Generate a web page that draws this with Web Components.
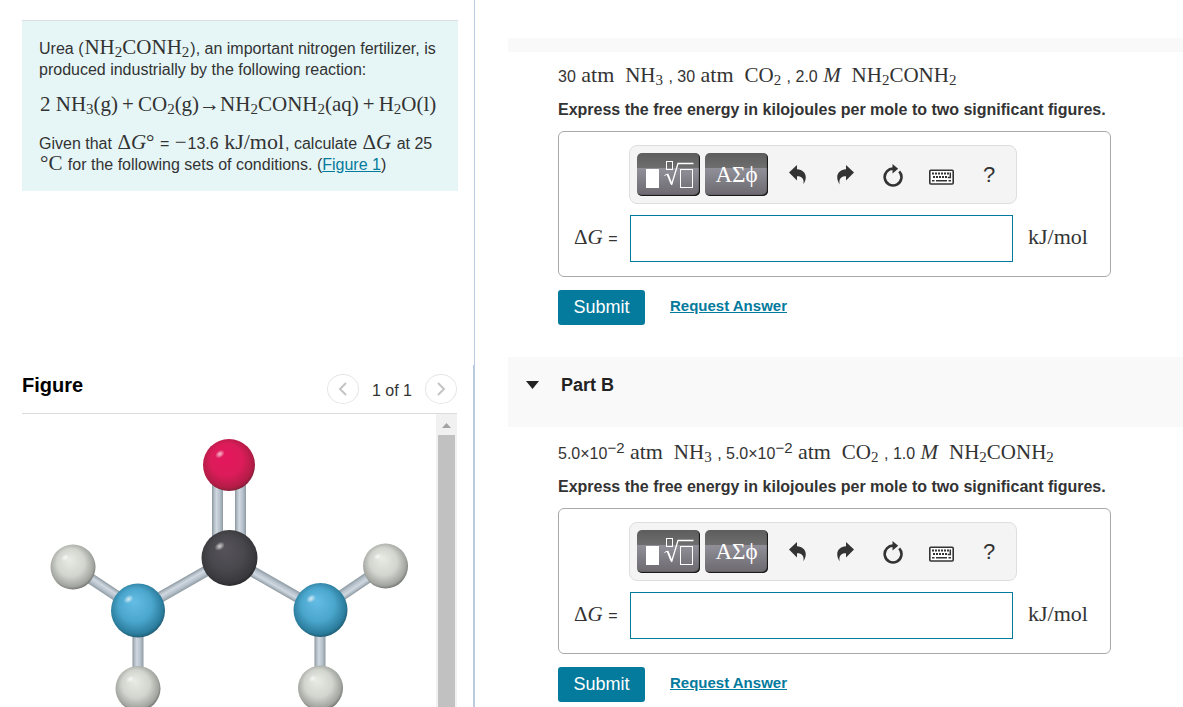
<!DOCTYPE html>
<html lang="en">
<head>
<meta charset="utf-8">
<meta name="viewport" content="width=device-width, initial-scale=1">
<title>Urea - Gibbs free energy</title>
<style>
  body {
    margin: 0;
    background: #fff;
    color: #333;
    font: 16px/20px "Liberation Sans", Arial, sans-serif;
  }
</style>
</head>
<body>
<assignment-page>
  <problem-intro slot="intro">
    <p>Urea (<math-text>NH2CONH2</math-text>), an important nitrogen fertilizer, is<br>
      produced industrially by the following reaction:</p>
    <p class="reaction"><math-text>2 NH3(g) + CO2(g)→NH2CONH2(aq) + H2O(l)</math-text></p>
    <p>Given that <math-text>Δ_G°</math-text> = <math-text>−</math-text>13.6 <math-text unit>kJ/mol</math-text>, calculate <math-text>Δ_G</math-text> at 25<br>
      <math-text>°C</math-text> for the following sets of conditions. (<a href="#figure">Figure 1</a>)</p>
  </problem-intro>

  <figure-viewer slot="figure" id="figure" heading="Figure" index="1" total="1">
    <urea-molecule></urea-molecule>
  </figure-viewer>

  <problem-part>
    <span slot="conditions">30 <math-text unit>atm</math-text>&nbsp; <math-text>NH3</math-text> , 30 <math-text unit>atm</math-text>&nbsp; <math-text>CO2</math-text> , 2.0 <math-text>_M</math-text>&nbsp; <math-text>NH2CONH2</math-text></span>
    Express the free energy in kilojoules per mole to two significant figures.
  </problem-part>

  <problem-part label="Part B">
    <span slot="conditions">5.0×10<sup>−2</sup> <math-text unit>atm</math-text>&nbsp; <math-text>NH3</math-text> , 5.0×10<sup>−2</sup> <math-text unit>atm</math-text>&nbsp; <math-text>CO2</math-text> , 1.0 <math-text>_M</math-text>&nbsp; <math-text>NH2CONH2</math-text></span>
    Express the free energy in kilojoules per mole to two significant figures.
  </problem-part>
</assignment-page>

<script>
/**
 * Inline math. Digits after a letter become subscripts,
 * an underscore makes the next letter italic.
 */
class MathText extends HTMLElement {
  constructor() {
    super();
    this.attachShadow({ mode: 'open' });
  }

  connectedCallback() {
    this.render();
  }

  format(source) {
    return source
      .replace(/([A-Z])(\d)/g, '$1<sub>$2</sub>')
      .replace(/_([A-Z])/g, '<i>$1</i>')
      .replace(/ \+ /g, '<span class="op">+</span>');
  }

  render() {
    // no whitespace before the text, it would show up inline
    this.shadowRoot.innerHTML = `<style>
        :host {
          margin: 0 1px;
          font-family: "Liberation Serif", "Times New Roman", serif;
          font-size: 21px;
          line-height: 0;
          white-space: nowrap;
        }
        :host([unit]) { font-size: 22px; }
        sub {
          font-size: 15px;
          line-height: 0;
          vertical-align: -3px;
        }
        .op { margin: 0 4px; }
      </style>${this.format(this.textContent.trim())}`;
  }
}

/** Two panes: problem text and figure on the left, parts on the right */
class AssignmentPage extends HTMLElement {
  constructor() {
    super();
    this.attachShadow({ mode: 'open' }).innerHTML = `
      <style>
        :host {
          display: grid;
          grid-template-columns: 475px minmax(0, 1fr);
          height: 100vh;
          overflow: hidden;
        }
        aside {
          display: flex;
          flex-direction: column;
          min-height: 0;
        }
        .intro {
          flex: 1;
          min-height: 0;
          padding: 20px 16px 0 22px;
          border-right: 1px solid #b8cbdf;
        }
        .figure {
          flex: 0 0 342px;
          display: flex;
          min-height: 0;
          padding: 0 16px 0 22px;
          border-right: 2px solid #b8cbdf;
          box-sizing: border-box;
        }
        main {
          padding: 38px 0 0 33px;
          overflow: hidden;
        }
      </style>
      <aside>
        <div class="intro"><slot name="intro"></slot></div>
        <div class="figure"><slot name="figure"></slot></div>
      </aside>
      <main><slot></slot></main>
    `;
  }
}

class ProblemIntro extends HTMLElement {
  constructor() {
    super();
    this.attachShadow({ mode: 'open' }).innerHTML = `
      <style>
        :host {
          display: block;
          background: #e6f6f7;
          border-top: 1px solid #d9dedf;
          padding: 17px 12px 16px 17px;
        }
        ::slotted(p) {
          margin: 0;
          line-height: 21px;
          white-space: nowrap;
        }
        ::slotted(.reaction) { margin: 15px 0 17px; }
      </style>
      <slot></slot>
    `;
  }

  connectedCallback() {
    this.querySelectorAll('a').forEach(a => {
      a.style.color = '#047a9c';
    });
  }
}

class FigureViewer extends HTMLElement {
  constructor() {
    super();
    this.attachShadow({ mode: 'open' });
  }

  connectedCallback() {
    this.shadowRoot.innerHTML = `
      <style>
        :host {
          flex: 1;
          display: flex;
          flex-direction: column;
          min-width: 0;
        }
        header {
          display: flex;
          align-items: center;
          justify-content: space-between;
          height: 48px;
          flex: none;
          border-bottom: 1px solid #dcdcdc;
        }
        h2 {
          margin: 0 0 8px;
          font-size: 20px;
          line-height: 24px;
          color: #000;
        }
        nav {
          display: flex;
          align-items: center;
          gap: 13px;
        }
        nav span { padding-top: 4px; }
        button {
          display: grid;
          place-items: center;
          width: 32px;
          height: 30px;
          padding: 0;
          border: 1px solid #e6e6e6;
          border-radius: 50%;
          background: #fff;
        }
        .body {
          flex: 1;
          display: flex;
          min-height: 0;
          overflow: hidden;
        }
        .content {
          flex: 1;
          min-width: 0;
          overflow: hidden;
        }
        .scrollbar {
          width: 21px;
          background: #f1f1f1;
          display: flex;
          flex-direction: column;
          align-items: center;
        }
        .scrollbar svg { flex: none; }
        .thumb {
          flex: 1;
          width: 17px;
          background: #c1c1c1;
        }
      </style>
      <header>
        <h2>${this.getAttribute('heading')}</h2>
        <nav aria-label="Figures">
          <button type="button" aria-label="Previous figure">
            <svg width="10" height="14" viewBox="0 0 10 14" fill="none" stroke="#c4c4c4" stroke-width="2"><path d="M8 1 2 7l6 6"/></svg>
          </button>
          <span>${this.getAttribute('index')} of ${this.getAttribute('total')}</span>
          <button type="button" aria-label="Next figure">
            <svg width="10" height="14" viewBox="0 0 10 14" fill="none" stroke="#c4c4c4" stroke-width="2"><path d="M2 1l6 6-6 6"/></svg>
          </button>
        </nav>
      </header>
      <div class="body">
        <div class="content"><slot></slot></div>
        <div class="scrollbar" aria-hidden="true">
          <svg width="21" height="21"><path d="M6 14h9l-4.500-5z" fill="#a3a3a3"/></svg>
          <div class="thumb"></div>
        </div>
      </div>
    `;
  }
}

/** Ball and stick model of urea */
class UreaMolecule extends HTMLElement {
  constructor() {
    super();
    this.attachShadow({ mode: 'open' });
  }

  connectedCallback() {
    const bonds = [
      [195.5, 70, 195.5, 125], [218.5, 70, 218.5, 125],
      [207, 144, 116, 196], [207, 144, 298, 196],
      [116, 196, 51, 153], [298, 196, 363, 152],
      [116, 196, 116, 274], [298, 196, 298, 274]
    ];
    const atoms = [
      ['o', 207, 51, 26], ['c', 207.5, 144, 28],
      ['n', 116, 196.5, 27], ['n', 298.5, 196, 27],
      ['h', 51, 153, 22.5], ['h', 363.5, 152, 22.5],
      ['h', 116, 274.5, 22.5], ['h', 298.5, 274, 22.5]
    ];
    this.shadowRoot.innerHTML = `
      <style>
        :host { display: block; }
        svg { display: block; }
      </style>
      <svg width="414" height="340" viewBox="0 0 414 340" role="img" aria-label="Urea molecule">
        <defs>
          <linearGradient id="bond" x2="0" y2="1">
            <stop offset="0" stop-color="#8f9ba3"/>
            <stop offset=".3" stop-color="#b7c2cc"/>
            <stop offset=".6" stop-color="#d0d8e1"/>
            <stop offset=".8" stop-color="#b3bec7"/>
            <stop offset="1" stop-color="#89949b"/>
          </linearGradient>
          ${this.ball('o', '#e5175e', '#dc1c5a', '#b31c47', '#71202f')}
          ${this.ball('c', '#56545a', '#49484d', '#39383c', '#252427')}
          ${this.ball('n', '#65bde5', '#4ba6cd', '#2b7d9d', '#1d5065')}
          ${this.ball('h', '#e8ece5', '#d2d5ce', '#a2a59f', '#62645f')}
          <radialGradient id="shine">
            <stop offset="0" stop-color="#fff" stop-opacity=".75"/>
            <stop offset="1" stop-color="#fff" stop-opacity="0"/>
          </radialGradient>
        </defs>
        ${bonds.map(b => this.bond(...b)).join('')}
        ${atoms.map(a => this.atom(...a)).join('')}
      </svg>
    `;
  }

  ball(id, light, main, dark, edge) {
    return `
      <radialGradient id="${id}" cx=".48" cy=".47" r=".56" fx=".42" fy=".32">
        <stop offset="0" stop-color="${light}"/>
        <stop offset=".55" stop-color="${main}"/>
        <stop offset=".87" stop-color="${dark}"/>
        <stop offset="1" stop-color="${edge}"/>
      </radialGradient>`;
  }

  bond(x1, y1, x2, y2) {
    const length = Math.hypot(x2 - x1, y2 - y1);
    const angle = Math.atan2(y2 - y1, x2 - x1) * 180 / Math.PI;
    return `<rect x="0" y="-5.5" width="${length}" height="11" fill="url(#bond)"
      transform="translate(${x1} ${y1}) rotate(${angle})"/>`;
  }

  atom(kind, x, y, r) {
    return `<circle cx="${x}" cy="${y}" r="${r}" fill="url(#${kind})"/>
      <ellipse cx="${x - r * .35}" cy="${y - r * .42}" rx="${r * .2}" ry="${r * .14}" fill="url(#shine)"
        transform="rotate(-35 ${x - r * .35} ${y - r * .42})"/>`;
  }
}

/** Toolbar over the answer box */
class MathToolbar extends HTMLElement {
  constructor() {
    super();
    this.attachShadow({ mode: 'open' }).innerHTML = `
      <style>
        :host {
          display: flex;
          align-items: center;
          height: 59px;
          padding: 0 0 0 7px;
          box-sizing: border-box;
          border: 1px solid #dedede;
          border-radius: 8px;
          background: #f4f4f4;
        }
        button {
          display: grid;
          place-items: center;
          flex: 0 1 48px;
          height: 43px;
          padding: 0;
          border: 0;
          background: none;
          color: #333;
          font: 22px/22px "Liberation Sans", Arial, sans-serif;
        }
        .palette {
          flex: none;
          width: 63px;
          margin-right: 5px;
          border-radius: 5px;
          background: linear-gradient(#5d5d5d, #6e6e6e 15px, #918f98 15px, #6b696e);
          box-shadow: inset -1px -1px 1px #111;
          color: #fff;
        }
        .greek {
          font: 23px/41px "Liberation Serif", "DejaVu Serif", serif;
        }
      </style>
      <button class="palette" type="button" aria-label="Templates">
        <svg width="63" height="43" viewBox="0 0 63 43" fill="none" stroke="#fff">
          <rect x="9.500" y="16.500" width="12" height="18" fill="#fff"/>
          <rect x="29.500" y="8.500" width="6" height="8"/>
          <path d="M27.500 22.500l3-1.500" />
          <path d="M30.500 21l4 10" stroke-width="2"/>
          <path d="M34.500 32L41 10.500h15.500" stroke-width="1.300"/>
          <rect x="43.500" y="16.500" width="12" height="18"/>
        </svg>
      </button>
      <button class="palette greek" type="button" aria-label="Symbols">ΑΣϕ</button>
      <button type="button" aria-label="Undo">
        <svg width="17" height="20" viewBox="0 0 17 20" fill="#333"><path d="M0 7.500 8 0v4.300c8 .7 11.500 7 6.300 15.200C15.500 14 13 11.300 8 11.300v4.200z"/></svg>
      </button>
      <button type="button" aria-label="Redo">
        <svg width="17" height="20" viewBox="0 0 17 20" fill="#333"><path d="M17 7.500 9 0v4.300C1 5-2.500 11.300 2.700 19.500 1.500 14 4 11.300 9 11.300v4.200z"/></svg>
      </button>
      <button type="button" aria-label="Reset">
        <svg width="20" height="24" viewBox="0 0 20 24"><path d="M11 5.700A8.400 8.400 0 1 0 16.200 8.300" fill="none" stroke="#333" stroke-width="2.600"/><path d="M9.500 1l5.700 4.700-5.700 4.800z" fill="#333"/></svg>
      </button>
      <button type="button" aria-label="Keyboard shortcuts">
        <svg width="25" height="21" viewBox="0 0 25 21" fill="none" stroke="#333">
          <rect x=".8" y="6.300" width="23.400" height="13.700" rx="1" fill="#fff" stroke-width="1.600"/>
          <path d="M3 9.500h17" stroke-width="2" stroke-dasharray="2 1"/>
          <path d="M4 13h14" stroke-width="2" stroke-dasharray="2 1"/>
          <path d="M21.300 8.500v5h-2.500" stroke-width="1.500"/>
          <path d="M3 16.700h2.500M7 16.700h11M19.500 16.700h2.500" stroke-width="1.600"/>
        </svg>
      </button>
      <button type="button" aria-label="Help">?</button>
    `;
  }
}

/** One part of the problem: header, conditions, answer box, actions */
class ProblemPart extends HTMLElement {
  constructor() {
    super();
    this.attachShadow({ mode: 'open' });
  }

  connectedCallback() {
    const label = this.getAttribute('label');
    this.shadowRoot.innerHTML = `
      <style>
        :host {
          display: block;
          margin-bottom: 32px;
        }
        header {
          min-height: 14px;
          background: #f9f9f9;
        }
        :host([label]) header {
          display: flex;
          align-items: center;
          gap: 22px;
          height: 56px;
          padding: 0 18px 14px;
          margin-bottom: 2px;
        }
        h2 {
          margin: 0;
          font-size: 18px;
          line-height: 20px;
          color: #222;
        }
        .toggle {
          display: flex;
          padding: 0;
          border: 0;
          background: none;
        }
        .body { padding: 13px 0 0 50px; }
        .conditions {
          line-height: 24px;
          white-space: nowrap;
        }
        .instructions {
          margin: 11px 0;
          font-weight: bold;
        }
        .answer {
          display: grid;
          grid-template-columns: 56px minmax(0, 388px) auto;
          row-gap: 11px;
          align-items: center;
          max-width: 553px;
          box-sizing: border-box;
          padding: 13px 14px 14px;
          border: 1px solid #a9a9a9;
          border-radius: 6px;
        }
        math-toolbar { grid-column: 2; }
        label { grid-column: 1; }
        input {
          height: 47px;
          min-width: 0;
          margin: 0 4px 0 1px;
          padding: 0 8px;
          box-sizing: border-box;
          border: 1px solid #047a9c;
          background: #fff;
          font: inherit;
          color: inherit;
        }
        .unit { padding-left: 10px; }
        .actions {
          display: flex;
          align-items: center;
          gap: 25px;
          margin-top: 13px;
        }
        .submit {
          width: 87px;
          height: 35px;
          padding: 0 0 2px;
          border: 0;
          border-radius: 3px;
          background: #047a9c;
          color: #fff;
          font: 18px/20px "Liberation Sans", Arial, sans-serif;
        }
        a {
          padding-bottom: 3px;
          color: #047a9c;
          font-size: 15px;
          font-weight: bold;
        }
      </style>
      <header>
        ${label ? `
          <button class="toggle" type="button" aria-label="Collapse ${label}">
            <svg width="13" height="8" viewBox="0 0 13 8"><path d="M0 0h13L6.500 8z" fill="#222"/></svg>
          </button>
          <h2>${label}</h2>` : ''}
      </header>
      <div class="body">
        <div class="conditions"><slot name="conditions"></slot></div>
        <div class="instructions"><slot></slot></div>
        <div class="answer">
          <math-toolbar></math-toolbar>
          <label for="answer"><math-text>Δ_G</math-text> =</label>
          <input id="answer" type="text" autocomplete="off">
          <span class="unit"><math-text unit>kJ/mol</math-text></span>
        </div>
        <div class="actions">
          <button class="submit" type="button">Submit</button>
          <a href="#request">Request Answer</a>
        </div>
      </div>
    `;
    this.querySelectorAll('sup').forEach(sup => {
      sup.style.cssText = 'font-size: 15px; line-height: 0; vertical-align: 6px';
    });
  }
}

customElements.define('math-text', MathText);
customElements.define('math-toolbar', MathToolbar);
customElements.define('urea-molecule', UreaMolecule);
customElements.define('problem-intro', ProblemIntro);
customElements.define('figure-viewer', FigureViewer);
customElements.define('problem-part', ProblemPart);
customElements.define('assignment-page', AssignmentPage);
</script>
</body>
</html>
